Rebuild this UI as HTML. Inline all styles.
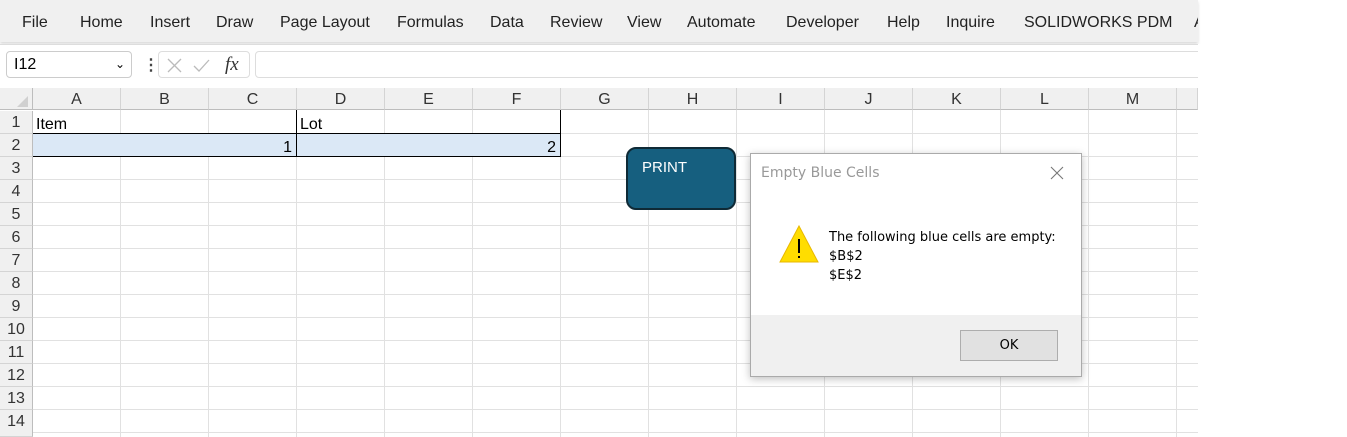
<!DOCTYPE html><html><head><style>
body{margin:0;width:1347px;height:437px;overflow:hidden;background:#fff;font-family:"Liberation Sans",sans-serif;position:relative}
.a{position:absolute}
.menu{left:0;top:0;width:1198px;height:42px;background:#f0f0f0;box-shadow:0 2px 3px rgba(0,0,0,.15);overflow:hidden;white-space:nowrap}
.menu span{position:absolute;top:14px;font-size:16px;color:#222}
.ch{top:88px;height:22px;width:88px;background:#f0f0f0;border-right:1px solid #d4d4d4;border-bottom:1px solid #bdbdbd;box-sizing:border-box;text-align:center;font-size:16px;line-height:23px;color:#333}
.rh{left:0;width:33px;height:23px;background:#f0f0f0;border-right:1px solid #bdbdbd;border-bottom:1px solid #d4d4d4;box-sizing:border-box;text-align:center;font-size:16px;line-height:23px;color:#333}
</style></head><body>
<div class="a menu">
<span style="left:22px">File</span><span style="left:80px">Home</span><span style="left:150px">Insert</span><span style="left:216px">Draw</span><span style="left:280px">Page Layout</span><span style="left:397px">Formulas</span><span style="left:490px">Data</span><span style="left:550px">Review</span><span style="left:627px">View</span><span style="left:687px">Automate</span><span style="left:786px">Developer</span><span style="left:887px">Help</span><span style="left:946px">Inquire</span><span style="left:1024px">SOLIDWORKS PDM</span><span style="left:1194px">A</span>
</div>
<div class="a" style="left:0;top:44px;width:1198px;height:44px;background:#fff;border-top:1px solid #ddd"></div>
<div class="a" style="left:6px;top:51px;width:126px;height:27px;border:1px solid #ccc;border-radius:4px;box-sizing:border-box;font-size:16px;line-height:25px;padding-left:7px">I12<span style="position:absolute;right:6px;top:0;font-size:12px">&#8964;</span></div>
<div class="a" style="left:143px;top:55px;font-size:16px;font-weight:bold;color:#444">&#8942;</div>
<div class="a" style="left:158px;top:51px;width:92px;height:27px;border:1px solid #ddd;border-radius:4px;box-sizing:border-box">
<svg width="92" height="27" style="position:absolute;left:0;top:0"><path d="M9 7l13 13M22 7L9 20" stroke="#bbb" stroke-width="1.3" fill="none"/><path d="M35 14l5 5 10-11" stroke="#bbb" stroke-width="1.3" fill="none"/></svg>
<span style="position:absolute;left:66px;top:2px;font-family:'Liberation Serif',serif;font-style:italic;font-size:19px;color:#333">fx</span></div>
<div class="a" style="left:255px;top:51px;width:950px;height:27px;border:1px solid #ddd;border-radius:4px;box-sizing:border-box"></div>
<div class="a" style="left:1198px;top:44px;width:149px;height:44px;background:#fff"></div>
<div class="a" style="left:0;top:88px;width:33px;height:22px;background:#f0f0f0;border-right:1px solid #bdbdbd;border-bottom:1px solid #bdbdbd;box-sizing:border-box"><svg width="32" height="22"><path d="M28 19V8L17 19z" fill="#d0d0d0"/></svg></div>
<svg class="a" style="left:33px;top:110px" width="1165" height="327">
<g stroke="#e1e1e1" stroke-width="1">
<path d="M87.5 0V327M175.5 0V327M263.5 0V327M351.5 0V327M439.5 0V327M527.5 0V327M615.5 0V327M703.5 0V327M791.5 0V327M879.5 0V327M967.5 0V327M1055.5 0V327M1143.5 0V327"/>
<path d="M0 23.5H1165M0 46.5H1165M0 69.5H1165M0 92.5H1165M0 115.5H1165M0 138.5H1165M0 161.5H1165M0 184.5H1165M0 207.5H1165M0 230.5H1165M0 253.5H1165M0 276.5H1165M0 299.5H1165M0 322.5H1165"/>
</g>
<rect x="0" y="24" width="527" height="22" fill="#dbe8f6"/>
<g stroke="#000" stroke-width="1"><path d="M0 23.5H528M0 46.5H528M263.5 0V47M527.5 0V47"/></g>
<text x="3" y="19" font-size="16" font-family="Liberation Sans">Item</text>
<text x="267" y="19" font-size="16" font-family="Liberation Sans">Lot</text>
<text x="259" y="42" font-size="16" font-family="Liberation Sans" text-anchor="end">1</text>
<text x="523" y="42" font-size="16" font-family="Liberation Sans" text-anchor="end">2</text>
</svg>
<div class="a ch" style="left:33px">A</div><div class="a ch" style="left:121px">B</div><div class="a ch" style="left:209px">C</div><div class="a ch" style="left:297px">D</div><div class="a ch" style="left:385px">E</div><div class="a ch" style="left:473px">F</div><div class="a ch" style="left:561px">G</div><div class="a ch" style="left:649px">H</div><div class="a ch" style="left:737px">I</div><div class="a ch" style="left:825px">J</div><div class="a ch" style="left:913px">K</div><div class="a ch" style="left:1001px">L</div><div class="a ch" style="left:1089px">M</div><div class="a ch" style="left:1177px;width:21px"></div>
<div class="a rh" style="top:111px">1</div><div class="a rh" style="top:134px">2</div><div class="a rh" style="top:157px">3</div><div class="a rh" style="top:180px">4</div><div class="a rh" style="top:203px">5</div><div class="a rh" style="top:226px">6</div><div class="a rh" style="top:249px">7</div><div class="a rh" style="top:272px">8</div><div class="a rh" style="top:295px">9</div><div class="a rh" style="top:318px">10</div><div class="a rh" style="top:341px">11</div><div class="a rh" style="top:364px">12</div><div class="a rh" style="top:387px">13</div><div class="a rh" style="top:410px;height:27px">14</div>
<div class="a" style="left:626px;top:147px;width:110px;height:63px;background:#165f7f;border:2px solid #0f2a36;border-radius:10px;box-sizing:border-box;color:#fff;font-size:15px;padding:10px 0 0 14px">PRINT</div>
<div class="a" style="left:750px;top:153px;width:332px;height:224px;background:#fff;border:1px solid #aaa;box-sizing:border-box;box-shadow:0 2px 8px rgba(0,0,0,.25);font-family:'DejaVu Sans',sans-serif">
<div class="a" style="left:10px;top:11px;font-size:14px;color:#999">Empty Blue Cells</div>
<svg class="a" style="left:298px;top:11px" width="16" height="16"><path d="M2 2l12 12M14 2L2 14" stroke="#777" stroke-width="1.1"/></svg>
<svg class="a" style="left:27px;top:70px" width="42" height="40"><path d="M21 2L40 38H2z" fill="#fd0" stroke="#e8b800" stroke-width="1"/><path d="M21 15v14" stroke="#000" stroke-width="2"/><rect x="20" y="32" width="2" height="2"/></svg>
<div class="a" style="left:78px;top:74px;font-size:13px;line-height:19px;color:#000">The following blue cells are empty:<br>$B$2<br>$E$2</div>
<div class="a" style="left:0;top:161px;width:330px;height:61px;background:#f0f0f0"></div>
<div class="a" style="left:209px;top:176px;width:98px;height:31px;background:#e1e1e1;border:1px solid #adadad;box-sizing:border-box;text-align:center;line-height:29px;font-size:13px">OK</div>
</div>
</body></html>
